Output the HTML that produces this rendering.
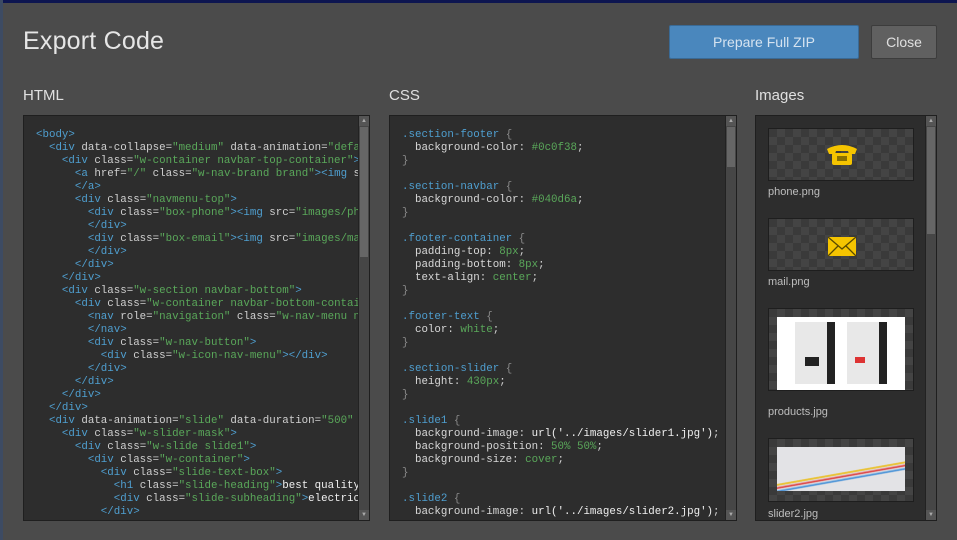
<!DOCTYPE html>
<html><head><meta charset="utf-8"><style>
*{margin:0;padding:0;box-sizing:border-box}
body{width:957px;height:540px;overflow:hidden;background:#4b4b4b;font-family:"Liberation Sans",sans-serif;position:relative}
.topband{position:absolute;left:0;top:0;width:957px;height:3px;background:#0d1550}
.leftband{position:absolute;left:0;top:0;width:3px;height:540px;background:#3d4b63}
h1{position:absolute;left:23px;top:27px;font-size:25px;font-weight:normal;color:#e6e6e6;letter-spacing:0.2px}
.btn{position:absolute;top:25px;height:34px;line-height:33px;text-align:center;font-size:14px;border-radius:2px}
.zip{left:669px;width:190px;background:#4a87bd;border:1px solid #3a6a95;color:#d5e3f0}
.close{left:871px;width:66px;background:#606060;border:1px solid #3c3c3c;color:#e0e0e0}
.lbl{position:absolute;top:87px;font-size:15px;color:#e0e0e0}
.panel{position:absolute;top:115px;height:406px;background:#2d2d2d;border:1px solid #1f1f1f;overflow:hidden}
.code{position:absolute;left:12px;top:13px;font-family:"Liberation Mono",monospace;font-size:10.8px;line-height:13px;white-space:pre;color:#d0d0d0}
.sb{position:absolute;right:0;top:0;width:11px;height:100%;background:#464646;border-left:1px solid #222}
.sb .th{position:absolute;left:1px;right:1px;top:11px;background:#666}
.sb .up,.sb .dn{position:absolute;left:0;width:10px;height:10px;background:#555;color:#aaa;font-size:6px;text-align:center;line-height:10px}
.sb .up{top:0}.sb .dn{bottom:0}
.t{color:#4f9fd0}.s{color:#5aa85a}.w{color:#f0f0f0}.b{color:#8a8a8a}.p{color:#d8d8d8}
.card{position:absolute;left:12px;width:146px;border:1px solid #1e1e1e;
background-color:#3a3a3a;background-image:linear-gradient(45deg,#444 25%,transparent 25%,transparent 75%,#444 75%),linear-gradient(45deg,#444 25%,transparent 25%,transparent 75%,#444 75%);background-size:16px 16px;background-position:0 0,8px 8px}
.cap{position:absolute;left:12px;font-size:11px;color:#bdbdbd}
</style></head><body>
<div class="topband"></div><div class="leftband"></div>
<h1>Export Code</h1>
<div class="btn zip">Prepare Full ZIP</div>
<div class="btn close">Close</div>
<div class="lbl" style="left:23px">HTML</div>
<div class="lbl" style="left:389px">CSS</div>
<div class="lbl" style="left:755px">Images</div>

<div class="panel" style="left:23px;width:347px">
<div class="code"><span class="t">&lt;body&gt;</span>
  <span class="t">&lt;div</span> data-collapse=<span class="s">"medium"</span> data-animation=<span class="s">"default"</span>
    <span class="t">&lt;div</span> class=<span class="s">"w-container navbar-top-container"</span><span class="t">&gt;</span>
      <span class="t">&lt;a</span> href=<span class="s">"/"</span> class=<span class="s">"w-nav-brand brand"</span><span class="t">&gt;&lt;img</span> src
      <span class="t">&lt;/a&gt;</span>
      <span class="t">&lt;div</span> class=<span class="s">"navmenu-top"</span><span class="t">&gt;</span>
        <span class="t">&lt;div</span> class=<span class="s">"box-phone"</span><span class="t">&gt;&lt;img</span> src=<span class="s">"images/phone</span>
        <span class="t">&lt;/div&gt;</span>
        <span class="t">&lt;div</span> class=<span class="s">"box-email"</span><span class="t">&gt;&lt;img</span> src=<span class="s">"images/mail</span>
        <span class="t">&lt;/div&gt;</span>
      <span class="t">&lt;/div&gt;</span>
    <span class="t">&lt;/div&gt;</span>
    <span class="t">&lt;div</span> class=<span class="s">"w-section navbar-bottom"</span><span class="t">&gt;</span>
      <span class="t">&lt;div</span> class=<span class="s">"w-container navbar-bottom-container"</span>
        <span class="t">&lt;nav</span> role=<span class="s">"navigation"</span> class=<span class="s">"w-nav-menu nav</span>
        <span class="t">&lt;/nav&gt;</span>
        <span class="t">&lt;div</span> class=<span class="s">"w-nav-button"</span><span class="t">&gt;</span>
          <span class="t">&lt;div</span> class=<span class="s">"w-icon-nav-menu"</span><span class="t">&gt;&lt;/div&gt;</span>
        <span class="t">&lt;/div&gt;</span>
      <span class="t">&lt;/div&gt;</span>
    <span class="t">&lt;/div&gt;</span>
  <span class="t">&lt;/div&gt;</span>
  <span class="t">&lt;div</span> data-animation=<span class="s">"slide"</span> data-duration=<span class="s">"500"</span> 
    <span class="t">&lt;div</span> class=<span class="s">"w-slider-mask"</span><span class="t">&gt;</span>
      <span class="t">&lt;div</span> class=<span class="s">"w-slide slide1"</span><span class="t">&gt;</span>
        <span class="t">&lt;div</span> class=<span class="s">"w-container"</span><span class="t">&gt;</span>
          <span class="t">&lt;div</span> class=<span class="s">"slide-text-box"</span><span class="t">&gt;</span>
            <span class="t">&lt;h1</span> class=<span class="s">"slide-heading"</span><span class="t">&gt;</span><span class="w">best quality</span>
            <span class="t">&lt;div</span> class=<span class="s">"slide-subheading"</span><span class="t">&gt;</span><span class="w">electrical</span>
          <span class="t">&lt;/div&gt;</span></div>
<div style="position:absolute;left:335px;top:0;width:1px;height:100%;background:#2d2d2d"></div>
<div class="sb" style="background:#464646"><div class="up">▲</div><div class="th" style="height:130px"></div><div class="dn">▼</div></div>
</div>

<div class="panel" style="left:389px;width:348px">
<div class="code"><span class="t">.section-footer</span> <span class="b">{</span>
  <span class="p">background-color</span>: <span class="s">#0c0f38</span>;
<span class="b">}</span>

<span class="t">.section-navbar</span> <span class="b">{</span>
  <span class="p">background-color</span>: <span class="s">#040d6a</span>;
<span class="b">}</span>

<span class="t">.footer-container</span> <span class="b">{</span>
  <span class="p">padding-top</span>: <span class="s">8px</span>;
  <span class="p">padding-bottom</span>: <span class="s">8px</span>;
  <span class="p">text-align</span>: <span class="s">center</span>;
<span class="b">}</span>

<span class="t">.footer-text</span> <span class="b">{</span>
  <span class="p">color</span>: <span class="s">white</span>;
<span class="b">}</span>

<span class="t">.section-slider</span> <span class="b">{</span>
  <span class="p">height</span>: <span class="s">430px</span>;
<span class="b">}</span>

<span class="t">.slide1</span> <span class="b">{</span>
  <span class="p">background-image</span>: <span class="w">url('../images/slider1.jpg')</span>;
  <span class="p">background-position</span>: <span class="s">50% 50%</span>;
  <span class="p">background-size</span>: <span class="s">cover</span>;
<span class="b">}</span>

<span class="t">.slide2</span> <span class="b">{</span>
  <span class="p">background-image</span>: <span class="w">url('../images/slider2.jpg')</span>;</div>
<div class="sb"><div class="up">▲</div><div class="th" style="height:40px"></div><div class="dn">▼</div></div>
</div>

<div class="panel" style="left:755px;width:182px">
<div class="card" style="top:12px;height:53px">
<svg width="146" height="53" viewBox="0 0 146 53"><path d="M58 20 q15 -8 30 0 l-2 5 h-6 l-1 -3 h-12 l-1 3 h-6 z" fill="#f5c400"/><rect x="63" y="24" width="20" height="12" rx="2" fill="#f5c400"/><rect x="68" y="27" width="10" height="5" fill="#8a7000"/></svg>
</div>
<div class="cap" style="top:70px">phone.png</div>
<div class="card" style="top:102px;height:53px">
<svg width="146" height="53" viewBox="0 0 146 53"><rect x="59" y="18" width="28" height="19" fill="#f5c400"/><path d="M59 18 L73 30 L87 18 M59 37 L69 27 M87 37 L77 27" stroke="#5a4a00" stroke-width="1.3" fill="none"/></svg>
</div>
<div class="cap" style="top:160px">mail.png</div>
<div class="card" style="top:192px;height:83px">
<div style="position:absolute;left:8px;top:8px;width:128px;height:73px;background:#fff">
<div style="position:absolute;left:18px;top:5px;width:40px;height:62px;background:#e8e8e8;border-right:8px solid #222"></div>
<div style="position:absolute;left:70px;top:5px;width:40px;height:62px;background:#e8e8e8;border-right:8px solid #222"></div>
<div style="position:absolute;left:28px;top:40px;width:14px;height:9px;background:#222"></div>
<div style="position:absolute;left:78px;top:40px;width:10px;height:6px;background:#d33"></div>
</div></div>
<div class="cap" style="top:290px">products.jpg</div>
<div class="card" style="top:322px;height:64px">
<div style="position:absolute;left:8px;top:8px;width:128px;height:44px;background:linear-gradient(170deg,transparent 55%,#e9c33b 56%,#e9c33b 58%,transparent 59%,#d33 62%,transparent 64%,#3a8bd6 67%,transparent 69%),#e3e3e6"></div></div>
<div class="cap" style="top:392px">slider2.jpg</div>
<div class="sb"><div class="up">▲</div><div class="th" style="height:107px"></div><div class="dn">▼</div></div>
</div>
</body></html>
